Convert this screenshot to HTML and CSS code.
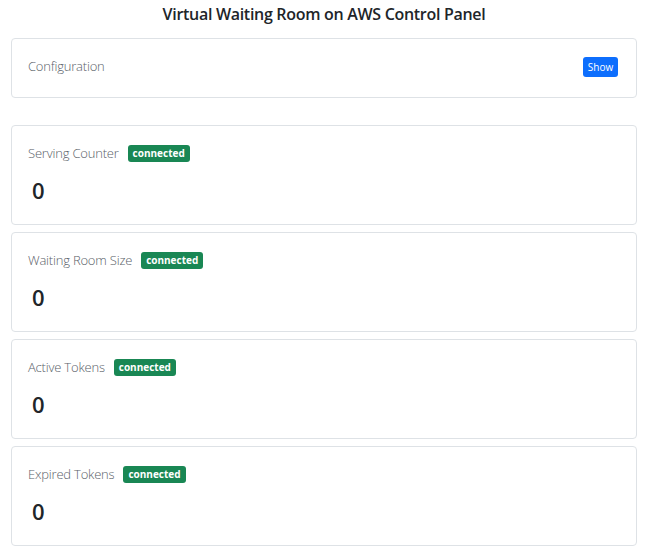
FILE: index.html
```html
<!DOCTYPE html>
<html>
<head>
  <title>Virtual Waiting Room on AWS Control Panel</title>
  <meta charset="utf-8">
  <meta name="viewport" content="width=device-width, initial-scale=1.0">
  <link rel="stylesheet" href="styles.css">
</head>
<body>
  <div class="container">
    <h1 class="page-title">Virtual Waiting Room on AWS Control Panel</h1>

    <div class="card config-card">
      <div class="card-row">
        <span class="card-title">Configuration</span>
        <button class="btn-show">Show</button>
      </div>
    </div>

    <div class="stats">
      <div class="card stat-card">
        <div class="stat-head">
          <span class="card-title">Serving Counter</span>
          <span class="badge">connected</span>
        </div>
        <div class="stat-value">0</div>
      </div>

      <div class="card stat-card">
        <div class="stat-head">
          <span class="card-title">Waiting Room Size</span>
          <span class="badge">connected</span>
        </div>
        <div class="stat-value">0</div>
      </div>

      <div class="card stat-card">
        <div class="stat-head">
          <span class="card-title">Active Tokens</span>
          <span class="badge">connected</span>
        </div>
        <div class="stat-value">0</div>
      </div>

      <div class="card stat-card">
        <div class="stat-head">
          <span class="card-title">Expired Tokens</span>
          <span class="badge">connected</span>
        </div>
        <div class="stat-value">0</div>
      </div>
    </div>
  </div>
</body>
</html>
```

FILE: styles.css
```css
* {
  margin: 0;
  padding: 0;
  box-sizing: border-box;
}

body {
  font-family: "Open Sans", "Noto Sans", sans-serif;
  background: #fff;
  color: #212529;
}

.container {
  width: 626px;
  margin-left: 11px;
}

.page-title {
  font-size: 16px;
  font-weight: 600;
  text-align: center;
  letter-spacing: -0.3px;
  line-height: 22px;
  padding-top: 3px;
  margin-bottom: 13px;
}

.card {
  border: 1px solid #dee2e6;
  border-radius: 4px;
  background: #fff;
  padding: 16px;
}

.card-row {
  display: flex;
  align-items: flex-start;
  justify-content: space-between;
  height: 26px;
  padding-right: 2px;
}

.card-title {
  font-size: 13px;
  font-weight: 300;
  line-height: 22px;
  color: #5a6169;
  letter-spacing: -0.2px;
}

.btn-show {
  font-family: inherit;
  font-size: 10px;
  font-weight: 500;
  color: #fff;
  background: #0d6efd;
  border: none;
  border-radius: 3px;
  width: 35px;
  height: 20px;
  margin-top: 2px;
}

.stats {
  margin-top: 27px;
  display: flex;
  flex-direction: column;
  gap: 7px;
}

.stat-card {
  height: 100px;
}

.stat-head {
  display: flex;
  align-items: center;
  gap: 9px;
  height: 22px;
}

.badge {
  font-size: 10px;
  font-weight: 700;
  color: #fff;
  background: #198754;
  border-radius: 3px;
  padding: 0 5px;
  height: 17px;
  line-height: 17px;
}

.stat-value {
  font-size: 22px;
  font-weight: 600;
  line-height: 26px;
  margin-top: 13px;
  padding-left: 4px;
}
```
